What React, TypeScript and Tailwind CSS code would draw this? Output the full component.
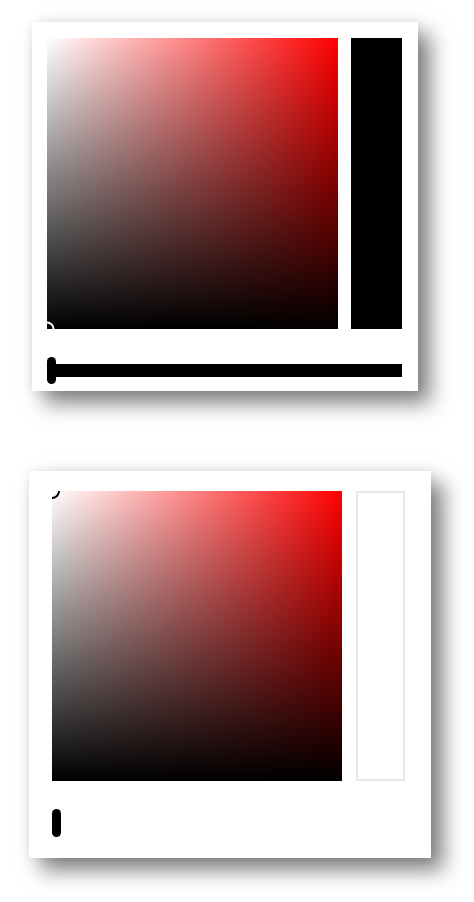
import React from "react";

function SatVal({ size, ring }: { size: string; ring: "white-bl" | "black-tl" }) {
  return (
    <div className={`relative overflow-hidden bg-[#ff0000] ${size}`}>
      <div className="absolute inset-0 bg-gradient-to-r from-white to-transparent" />
      <div className="absolute inset-0 bg-gradient-to-t from-black to-transparent" />
      {ring === "white-bl" ? (
        <div className="absolute left-0 bottom-0 w-[15px] h-[15px] -translate-x-1/2 translate-y-1/2 rounded-full border-2 border-white" />
      ) : (
        <div className="absolute left-0 top-0 w-[16px] h-[16px] -translate-x-1/2 -translate-y-1/2 rounded-full border-2 border-black" />
      )}
    </div>
  );
}

export default function App() {
  return (
    <div className="min-h-[902px] w-[474px] bg-white pt-[22px] flex flex-col">
      {/* Card 1 */}
      <div className="ml-[32px] w-[386px] h-[369px] bg-white pt-[16px] pl-[15px] shadow-[12px_12px_20px_rgba(0,0,0,0.5),0_0_10px_rgba(0,0,0,0.08)]">
        <div className="flex gap-[13px]">
          <SatVal size="w-[291px] h-[291px]" ring="white-bl" />
          <div className="w-[51px] h-[291px] bg-black" />
        </div>
        <div className="relative mt-[28px] w-[355px] h-[27px] flex items-center">
          <div className="w-full h-[13px] bg-black" />
          <div className="absolute left-0 top-0 w-[9px] h-[27px] rounded-full bg-black" />
        </div>
      </div>

      {/* Card 2 */}
      <div className="mt-[80px] ml-[29px] w-[402px] h-[387px] bg-white pt-[20px] pl-[23px] shadow-[12px_12px_20px_rgba(0,0,0,0.5),0_0_10px_rgba(0,0,0,0.08)]">
        <div className="flex gap-[14px]">
          <SatVal size="w-[290px] h-[290px]" ring="black-tl" />
          <div className="w-[49px] h-[290px] bg-white border-2 border-[#e8e8e8]" />
        </div>
        <div className="mt-[28px] w-[9px] h-[28px] rounded-full bg-black" />
      </div>
    </div>
  );
}
